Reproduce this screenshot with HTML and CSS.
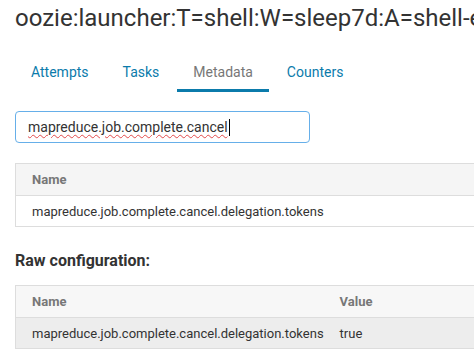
FILE: index.html
```html
<!DOCTYPE html>
<html>
<head>
<meta charset="utf-8">
<link rel="stylesheet" href="styles.css">
</head>
<body>
<div class="page">
  <h1 class="title">oozie:launcher:T=shell:W=sleep7d:A=shell-example:ID=0000001-oozie</h1>
  <nav class="tabs">
    <a class="tab">Attempts</a>
    <a class="tab">Tasks</a>
    <a class="tab active">Metadata</a>
    <a class="tab">Counters</a>
  </nav>
  <div class="search"><span class="typed">mapreduce.job.complete.cancel</span><span class="caret"></span></div>
  <table class="grid">
    <thead><tr><th>Name</th></tr></thead>
    <tbody><tr><td>mapreduce.job.complete.cancel.delegation.tokens</td></tr></tbody>
  </table>
  <h4 class="section">Raw configuration:</h4>
  <table class="grid raw">
    <thead><tr><th>Name</th><th class="wide">Value</th></tr></thead>
    <tbody><tr><td>mapreduce.job.complete.cancel.delegation.tokens</td><td>true</td></tr></tbody>
  </table>
</div>
</body>
</html>
```
FILE: styles.css
```css
html, body {
  margin: 0;
  padding: 0;
  overflow: hidden;
  background: #fff;
}
body {
  font-family: Roboto, "Liberation Sans", sans-serif;
  color: #333;
  font-size: 13px;
}
.page {
  padding: 0 0 0 15px;
  width: 700px;
}
.title {
  margin: 0;
  padding-top: 3px;
  font-size: 24px;
  font-weight: 400;
  line-height: 30px;
  white-space: nowrap;
  color: #333;
}
.tabs {
  display: flex;
  gap: 2px;
  margin-top: 27px;
}
.tab {
  padding: 2px 16px 0;
  height: 27px;
  line-height: 20px;
  font-size: 14px;
  color: #0b7bab;
  border-bottom: 3px solid transparent;
}
.tab.active {
  color: #777;
  border-bottom-color: #0b7bab;
}
.search {
  margin-top: 19px;
  width: 269px;
  height: 30px;
  border: 1px solid #66afe9;
  border-radius: 4px;
  padding: 0 12px;
  display: flex;
  align-items: center;
  color: #333;
  font-size: 14px;
}
.typed {
  text-decoration: underline wavy #e24a4a;
  text-decoration-thickness: 1px;
  text-underline-offset: 2px;
}
.caret {
  display: inline-block;
  width: 1px;
  height: 17px;
  background: #000;
  margin-left: 1px;
}
.grid {
  border-collapse: collapse;
  width: 640px;
  margin-top: 20px;
}
.grid th, .grid td {
  border: 1px solid #ddd;
  text-align: left;
  padding: 0 16px;
  white-space: nowrap;
}
.grid th {
  background: #f5f5f5;
  color: #777;
  font-weight: 700;
  height: 31px;
}
.grid td {
  height: 30px;
}
.section {
  margin: 24px 0 0 0;
  font-size: 16px;
  font-weight: 700;
  line-height: 20px;
  color: #333;
}
.raw {
  margin-top: 14px;
}
.raw th + th, .raw td + td {
  border-left: none;
  padding-left: 8px;
}
.raw th:first-child, .raw td:first-child {
  border-right: none;
  padding-right: 8px;
  width: 1px;
}
.raw th {
  background: #f7f7f7;
}
.raw td {
  background: #ededed;
}
```
